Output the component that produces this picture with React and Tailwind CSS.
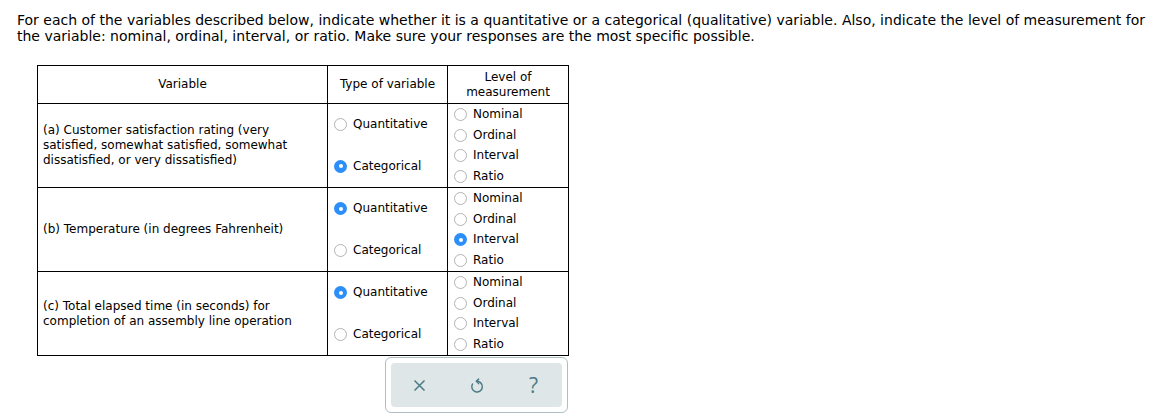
import React, { useState } from 'react';

const rows = [
  {
    id: 'a',
    lines: ['(a) Customer satisfaction rating (very', 'satisfied, somewhat satisfied, somewhat', 'dissatisfied, or very dissatisfied)'],
    type: 'Categorical',
    level: null,
  },
  {
    id: 'b',
    lines: ['(b) Temperature (in degrees Fahrenheit)'],
    type: 'Quantitative',
    level: 'Interval',
  },
  {
    id: 'c',
    lines: ['(c) Total elapsed time (in seconds) for', 'completion of an assembly line operation'],
    type: 'Quantitative',
    level: null,
  },
];

const types = ['Quantitative', 'Categorical'];
const levels = ['Nominal', 'Ordinal', 'Interval', 'Ratio'];

function Radio({ checked }) {
  return checked ? (
    <span className="flex h-[13px] w-[13px] shrink-0 items-center justify-center rounded-full bg-[#2c8ef8]">
      <span className="h-[4px] w-[4px] rounded-full bg-white" />
    </span>
  ) : (
    <span className="h-[13px] w-[13px] shrink-0 rounded-full border border-[#b3b3b3] bg-white" />
  );
}

function App() {
  const [answers, setAnswers] = useState(rows.map((r) => ({ type: r.type, level: r.level })));

  const pick = (i, key, val) => {
    const next = [...answers];
    next[i] = { ...next[i], [key]: val };
    setAnswers(next);
  };

  return (
    <div className="min-h-[414px] bg-white px-[17px] pt-[12px] text-[#000] font-['DejaVu_Sans',Verdana,sans-serif]">
      <p className="whitespace-nowrap text-[14px] leading-[16px]">
        For each of the variables described below, indicate whether it is a quantitative or a categorical (qualitative) variable. Also, indicate the level of measurement for
        <br />
        the variable: nominal, ordinal, interval, or ratio. Make sure your responses are the most specific possible.
      </p>

      <div className="ml-[20px] mt-[21px] w-[532px]">
        <table className="border-collapse text-[12px] leading-[15px]">
          <thead>
            <tr className="h-[38px]">
              <th className="w-[290px] border border-black font-normal">Variable</th>
              <th className="w-[120px] border border-black font-normal">Type of variable</th>
              <th className="w-[121px] border border-black p-0 font-normal leading-[15px]">
                Level of
                <br />
                measurement
              </th>
            </tr>
          </thead>
          <tbody>
            {rows.map((r, i) => (
              <tr key={r.id}>
                <td className="border border-black px-[5px] align-middle">
                  {r.lines.map((l) => (
                    <div key={l}>{l}</div>
                  ))}
                </td>
                <td className="border border-black p-0 align-top">
                  {types.map((t) => (
                    <button
                      key={t}
                      onClick={() => pick(i, 'type', t)}
                      className="flex h-[41.5px] w-full items-center gap-[6px] pl-[6px]"
                    >
                      <Radio checked={answers[i].type === t} />
                      <span>{t}</span>
                    </button>
                  ))}
                </td>
                <td className="border border-black p-0 align-top">
                  {levels.map((l) => (
                    <button
                      key={l}
                      onClick={() => pick(i, 'level', l)}
                      className="flex h-[20.75px] w-full items-center gap-[6px] pl-[6px]"
                    >
                      <Radio checked={answers[i].level === l} />
                      <span>{l}</span>
                    </button>
                  ))}
                </td>
              </tr>
            ))}
          </tbody>
        </table>

        <div className="ml-[348px] mt-[1px] w-[183px] rounded-[6px] border border-[#aebfc4] bg-white p-[5px]">
          <div className="grid h-[44px] grid-cols-3 items-center rounded-[4px] bg-[#dfe6e8] text-[#4b7b87]">
            <div className="flex justify-center">
              <svg width="13" height="13" viewBox="0 0 13 13" fill="none" stroke="currentColor" strokeWidth="1.5">
                <path d="M1.5 1.5l10 10M11.5 1.5l-10 10" />
              </svg>
            </div>
            <div className="flex justify-center">
              <svg width="14" height="17" viewBox="0 0 13 16" fill="none" stroke="currentColor" strokeWidth="1.4" strokeLinecap="round" strokeLinejoin="round">
                <path d="M6 4.1A5 5 0 1 1 2.2 6.6" />
                <path d="M8 2L6 4.1L8 6.2" />
              </svg>
            </div>
            <div className="flex justify-center text-[21px] leading-none font-['Open_Sans',sans-serif]">?</div>
          </div>
        </div>
      </div>
    </div>
  );
}

export default App;
